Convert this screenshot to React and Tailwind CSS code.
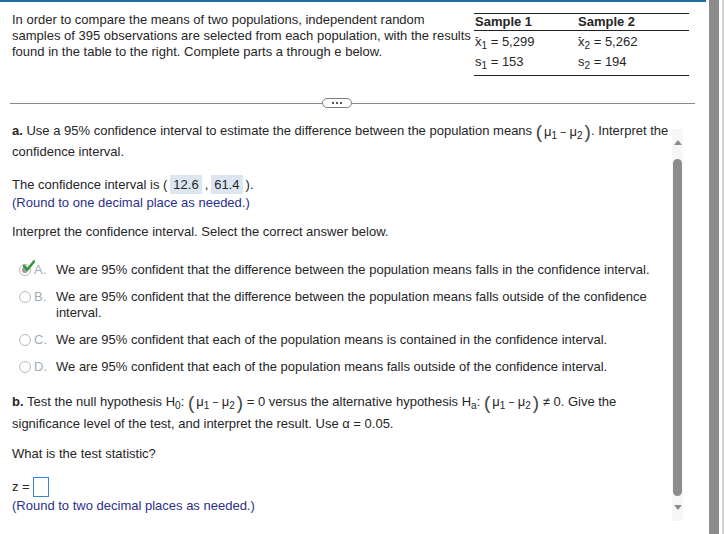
import React from "react";

function Sub({ children }) {
  return <sub className="relative top-[3px] text-[10px] leading-none">{children}</sub>;
}

function MuDiff() {
  return (
    <span className="inline-flex items-center whitespace-nowrap align-middle">
      <span className="text-[19px] font-light leading-none text-[#444]">(</span>
      <span className="px-[2px]">
        μ<Sub>1</Sub>
        <span className="px-[3px] text-[11px]">−</span>
        μ<Sub>2</Sub>
      </span>
      <span className="text-[19px] font-light leading-none text-[#444]">)</span>
    </span>
  );
}

function Radio({ checked }) {
  return (
    <span className="relative mt-[2px] inline-block h-[12px] w-[12px] shrink-0 rounded-full border border-[#b9b9b9] bg-white">
      {checked ? <span className="absolute left-[2px] top-[2px] h-[6px] w-[6px] rounded-full bg-[#9a9a9a]" /> : null}
      {checked ? (
        <svg className="absolute -top-[5px] left-[3px]" width="12" height="11" viewBox="0 0 12 11">
          <path d="M1 6 L4.5 9.5 L11 1.5" fill="none" stroke="#2f9a35" strokeWidth="2.6" strokeLinecap="round" strokeLinejoin="round" />
        </svg>
      ) : null}
    </span>
  );
}

const OPTIONS = [
  { key: "A", checked: true, text: "We are 95% confident that the difference between the population means falls in the confidence interval." },
  { key: "B", text: "We are 95% confident that the difference between the population means falls outside of the confidence interval." },
  { key: "C", text: "We are 95% confident that each of the population means is contained in the confidence interval." },
  { key: "D", text: "We are 95% confident that each of the population means falls outside of the confidence interval." },
];

export default function App() {
  return (
    <div className="flex h-[534px] w-[724px] overflow-hidden bg-white font-['Liberation_Sans',Arial,sans-serif] text-[13px] text-[#262626]">
      <div className="flex w-[709px] flex-col">
        <div className="h-[2px] w-[706px] bg-[#1c6f98]" />

        {/* intro + data table */}
        <div className="flex pl-[12px] pt-[10px]">
          <p className="w-[462px] leading-[16px]">
            In order to compare the means of two populations, independent random samples of 395 observations are selected from each population, with the results found in the table to the right. Complete parts a through e below.
          </p>
          <div className="mt-[1px] w-[215px] border-y border-[#222]">
            <div className="grid grid-cols-[103px_1fr] border-b border-[#222] pl-[1px] font-bold leading-[16px]">
              <span>Sample 1</span>
              <span>Sample 2</span>
            </div>
            <div className="grid grid-cols-[103px_1fr] pl-[1px] pt-[1px] leading-[19px]">
              <span>
                <span className="relative">x<span className="absolute -top-[7px] left-0 text-[10px]">-</span></span>
                <Sub>1</Sub> = 5,299
              </span>
              <span>
                <span className="relative">x<span className="absolute -top-[7px] left-0 text-[10px]">-</span></span>
                <Sub>2</Sub> = 5,262
              </span>
            </div>
            <div className="grid grid-cols-[103px_1fr] pb-[4px] pl-[1px] pt-[2px] leading-[18px]">
              <span>
                s<Sub>1</Sub> = 153
              </span>
              <span>
                s<Sub>2</Sub> = 194
              </span>
            </div>
          </div>
        </div>

        {/* divider */}
        <div className="mt-[22px] flex items-center pl-[10px] pr-[14px]">
          <div className="h-px w-[312px] bg-[#8a8a8a]" />
          <div className="flex h-[10px] w-[30px] items-center justify-center gap-[2px] rounded-full border border-[#7a7f87] bg-white">
            <span className="h-[2px] w-[2px] bg-[#555]" />
            <span className="h-[2px] w-[2px] bg-[#555]" />
            <span className="h-[2px] w-[2px] bg-[#555]" />
          </div>
          <div className="h-px flex-1 bg-[#8a8a8a]" />
        </div>

        {/* scroll area */}
        <div className="mt-[13px] flex flex-1">
          <div className="w-[671px] pl-[12px]">
            <p className="leading-[20px]">
              <b>a.</b> Use a 95% confidence interval to estimate the difference between the population means <MuDiff />. Interpret the confidence interval.
            </p>

            <p className="mt-[13px] flex items-center leading-[19px]">
              The confidence interval is (
              <span className="mx-[3px] bg-[#dce6f1] px-[3px]">12.6</span>,
              <span className="mx-[3px] bg-[#dce6f1] px-[3px]">61.4</span>).
            </p>
            <p className="leading-[18px] text-[#2b2f8c]">(Round to one decimal place as needed.)</p>

            <p className="mt-[11px] leading-[18px]">Interpret the confidence interval. Select the correct answer below.</p>

            <div className="mt-[21px] flex flex-col gap-[11px]">
              {OPTIONS.map((opt) => (
                <div key={opt.key} className="flex items-start pl-[7px] leading-[16px]">
                  <Radio checked={opt.checked} />
                  <span className="ml-[3px] w-[22px] shrink-0 text-[#a3abb6]">{opt.key}.</span>
                  <span className="w-[597px]">{opt.text}</span>
                </div>
              ))}
            </div>

            <p className="mt-[16px] leading-[21px]">
              <b>b.</b> Test the null hypothesis H<Sub>0</Sub>: <MuDiff /> = 0 versus the alternative hypothesis H<Sub>a</Sub>: <MuDiff /> ≠ 0. Give the significance level of the test, and interpret the result. Use α = 0.05.
            </p>

            <p className="mt-[11px] leading-[18px]">What is the test statistic?</p>

            <div className="mt-[14px] flex items-center leading-[18px]">
              <span>z =</span>
              <span className="ml-[3px] h-[20px] w-[16px] border border-[#3a85c9] bg-white" />
            </div>
            <p className="leading-[18px] text-[#2b2f8c]">(Round to two decimal places as needed.)</p>
          </div>

          {/* inner scrollbar */}
          <div className="ml-[1px] mt-[8px] flex h-[392px] w-[11px] flex-col items-center bg-[#f7f7f7]">
            <div className="mt-[11px] h-0 w-0 border-x-[4px] border-b-[5px] border-x-transparent border-b-[#8c8c8c]" />
            <div className="mt-[14px] h-[337px] w-[9px] rounded-full bg-[#8c8c8c]" />
            <div className="mt-[9px] h-0 w-0 border-x-[4px] border-t-[5px] border-x-transparent border-t-[#8c8c8c]" />
          </div>
        </div>
      </div>

      <div className="h-full w-[10px] bg-[#8c8c8c]" />
      <div className="h-full w-[3px] bg-white" />
      <div className="h-full w-[2px] bg-[#d4d4d4]" />
    </div>
  );
}
